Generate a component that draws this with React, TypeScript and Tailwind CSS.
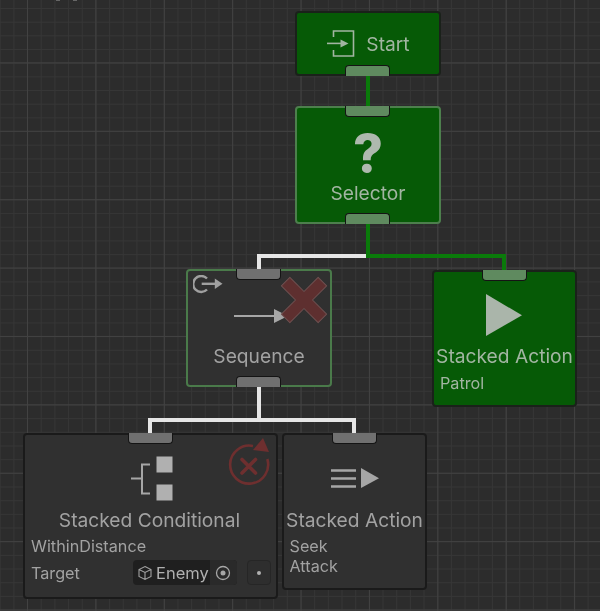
import React from "react";

const TXT = "text-[#a2a2a2]";
const TXTG = "text-[#a2b5a2]";

function Tab({ green, pos, x }: { green?: boolean; pos: "top" | "bottom"; x: string }) {
  const color = green ? "bg-[#5f8a5f]" : "bg-[#707070]";
  const shape =
    pos === "top"
      ? "-top-[2px] rounded-b-[4px] border-x-[1.5px] border-b-[1.5px]"
      : "-bottom-[2px] rounded-t-[4px] border-x-[1.5px] border-t-[1.5px]";
  return <div className={`absolute h-[11px] w-[45px] border-[#141414] ${color} ${shape} ${x}`} />;
}

function Node({ className, children }: { className: string; children: React.ReactNode }) {
  return <div className={`absolute box-border rounded-[4px] border-2 ${className}`}>{children}</div>;
}

function Wire({ className }: { className: string }) {
  return <div className={`absolute ${className}`} />;
}

export default function App() {
  return (
    <div className="h-[611px] w-[600px] overflow-hidden bg-[#2c2c2c]">
      <div
        className="relative h-[611px] w-[600px] bg-[#2c2c2c] [background-image:linear-gradient(to_right,#424242_1px,transparent_1px),linear-gradient(to_bottom,#424242_1px,transparent_1px),linear-gradient(to_right,#363636_1px,transparent_1px),linear-gradient(to_bottom,#363636_1px,transparent_1px)] [background-size:68.4px_68.4px,68.4px_68.4px,13.68px_13.68px,13.68px_13.68px] [background-position:27px_0,0_62.4px,13.4px_0,0_8px] font-['Inter',sans-serif] blur-[0.45px]"
      >
        <div className="absolute left-[56px] top-0 h-px w-[4px] bg-[#666666]" />
        <div className="absolute left-[73px] top-0 h-px w-[4px] bg-[#666666]" />

        {/* wires */}
        <Wire className="left-[366px] top-[76px] h-[30px] w-[4px] bg-[#0a7a0a]" />
        <Wire className="left-[257px] top-[254px] h-[16px] w-[4px] bg-[#e6e6e6]" />
        <Wire className="left-[257px] top-[254px] h-[4px] w-[110px] bg-[#e6e6e6]" />
        <Wire className="left-[366px] top-[223px] h-[35px] w-[4px] bg-[#0a7a0a]" />
        <Wire className="left-[366px] top-[254px] h-[4px] w-[140px] bg-[#0a7a0a]" />
        <Wire className="left-[502px] top-[254px] h-[16px] w-[4px] bg-[#0a7a0a]" />
        <Wire className="left-[257px] top-[386px] h-[36px] w-[4px] bg-[#e6e6e6]" />
        <Wire className="left-[148px] top-[418px] h-[4px] w-[208px] bg-[#e6e6e6]" />
        <Wire className="left-[148px] top-[418px] h-[16px] w-[4px] bg-[#e6e6e6]" />
        <Wire className="left-[352px] top-[418px] h-[16px] w-[4px] bg-[#e6e6e6]" />

        {/* Start */}
        <Node className="left-[295px] top-[11px] flex h-[65px] w-[146px] items-start justify-center gap-[11px] border-[#1a211a] bg-[#065a06] pl-[1px] pt-[17px]">
          <svg width="28" height="28" viewBox="0 0 28 28" className="shrink-0 text-[#a2b5a2]" fill="none" stroke="currentColor">
            <path d="M6.500 7V1h20v25h-20v-6" strokeWidth="1.600" />
            <path d="M0 13.400h15" strokeWidth="1.600" />
            <path d="M13.500 9.400l8 4-8 4z" fill="currentColor" stroke="none" />
          </svg>
          <span className={`mt-[-1px] text-[19.200px] leading-[30px] ${TXTG}`}>Start</span>
          <Tab green pos="bottom" x="left-[48px]" />
        </Node>

        {/* Selector */}
        <Node className="left-[295px] top-[106px] flex h-[118px] w-[146px] flex-col items-center border-[#4d7f4d] bg-[#065a06] pt-[18px]">
          <Tab green pos="top" x="left-[48px]" />
          <span className="h-[55px] text-[52px] font-extrabold leading-[55px] text-[#aeb9ae]">?</span>
          <span className={`mt-[-3px] text-[19.200px] leading-[30px] ${TXTG}`}>Selector</span>
          <Tab green pos="bottom" x="left-[48px]" />
        </Node>

        {/* Sequence */}
        <Node className="left-[186px] top-[269px] flex h-[118px] w-[146px] flex-col items-center border-[#4a7a4a] bg-[#303030] pt-[70px]">
          <Tab pos="top" x="left-[48px]" />
          <svg width="30" height="20" viewBox="0 0 30 20" className="absolute left-[4.500px] top-[3.500px] text-[#a0a0a0]" fill="none" stroke="currentColor">
            <path d="M14 3.500A8 8 0 1 0 14 14.500" strokeWidth="2.400" />
            <path d="M8.700 8.800h14" strokeWidth="2.400" />
            <path d="M21.800 3.600l7.700 5.200-7.700 5.200z" fill="currentColor" stroke="none" />
          </svg>
          <svg width="58" height="16" viewBox="0 0 58 16" className="absolute left-[44.500px] top-[36.500px]">
            <path d="M1 8h42" stroke="#a6a6a6" strokeWidth="2" />
            <path d="M41 1l14 7-14 7z" fill="#a6a6a6" />
          </svg>
          <svg width="50" height="50" viewBox="-25 -25 50 50" className="absolute left-[91px] top-[3.500px]">
            <path
              d="M-26 -6H-6V-26H6V-6H26V6H6V26H-6V6H-26Z"
              transform="rotate(45)"
              fill="#5e2f2f"
              stroke="#6e5050"
              strokeWidth="1"
              strokeLinejoin="round"
            />
          </svg>
          <span className={`text-[19.200px] leading-[30px] ${TXT}`}>Sequence</span>
          <Tab pos="bottom" x="left-[48px]" />
        </Node>

        {/* Stacked Action green */}
        <Node className="left-[432px] top-[270px] flex h-[137px] w-[145px] flex-col items-center border-[#1a211a] bg-[#065a06] pt-[21px]">
          <Tab green pos="top" x="left-[48px]" />
          <svg width="38" height="44" viewBox="0 0 38 44" className="ml-[-2px] shrink-0">
            <path d="M1 1l36 21.300L1 43z" fill="#aab5aa" />
          </svg>
          <span className={`mt-[4px] whitespace-nowrap text-[19.200px] leading-[30px] ${TXTG}`}>Stacked Action</span>
          <span className={`w-full pl-[6px] pt-[2px] text-[16.200px] leading-[20px] ${TXTG}`}>Patrol</span>
        </Node>

        {/* Stacked Conditional */}
        <Node className="left-[23px] top-[433px] flex h-[166px] w-[255px] flex-col border-[#1a1a1a] bg-[#303030] pt-[20px]">
          <Tab pos="top" x="left-[103px]" />
          <svg width="44" height="46" viewBox="0 0 44 46" className="ml-[104.500px] shrink-0 text-[#a6a6a6]" fill="none" stroke="currentColor">
            <path d="M1 23.500h11.500M20 9.500h-8v29h8" strokeWidth="2" />
            <rect x="26.500" y="1.500" width="16" height="16" fill="#b0b0b0" stroke="none" />
            <rect x="26.500" y="29.500" width="16" height="16" fill="#b0b0b0" stroke="none" />
          </svg>
          <svg width="46" height="50" viewBox="0 0 46 50" className="absolute left-[201.500px] top-[2.500px]" fill="none">
            <path d="M40.300 21A19 19 0 1 1 26 8" stroke="#6e2f2f" strokeWidth="2.600" />
            <path d="M36 0L42 14 26 12z" fill="#6e2f2f" />
            <path d="M15 21.500l13.500 13.500M28.500 21.500L15 35" stroke="#6e2f2f" strokeWidth="3.600" strokeLinecap="round" />
          </svg>
          <span className={`mt-[4px] pr-[2px] text-center text-[19.200px] leading-[30px] ${TXT}`}>Stacked Conditional</span>
          <span className={`pl-[6px] pt-[1px] text-[16.200px] leading-[20px] ${TXT}`}>WithinDistance</span>
          <div className="mt-[4px] flex h-[25px] items-center pl-[6px] pr-[5.500px]">
            <span className={`w-[102.500px] pt-[1px] text-[16.200px] ${TXT}`}>Target</span>
            <div className="flex h-[25px] w-[104px] items-center overflow-hidden rounded-[4px] bg-[#1f1f1f]">
              <svg width="16" height="16" viewBox="0 0 16 16" className="ml-[4px] shrink-0 text-[#a0a0a0]" fill="none" stroke="currentColor" strokeWidth="1.100">
                <path d="M8 1.500l6 3v7l-6 3-6-3v-7zM2 4.500l6 3 6-3M8 7.500v7" />
              </svg>
              <span className="ml-[3px] w-[54px] pt-[2px] text-[16.500px] text-[#b0b0b0]">Enemy</span>
              <div className="flex h-full flex-1 items-center justify-center bg-[#2a2a2a]">
                <svg width="16" height="16" viewBox="0 0 16 16" fill="none">
                  <circle cx="8" cy="8" r="6.500" stroke="#a6a6a6" strokeWidth="1.300" />
                  <circle cx="8" cy="8" r="2.500" fill="#a6a6a6" />
                </svg>
              </div>
            </div>
            <div className="ml-[10px] flex h-[25px] w-[24px] items-center justify-center rounded-[4px] border border-[#262626] bg-[#2e2e2e]">
              <div className="h-[4px] w-[4px] rounded-full bg-[#b0b0b0]" />
            </div>
          </div>
        </Node>

        {/* Stacked Action */}
        <Node className="left-[282px] top-[433px] flex h-[157px] w-[145px] flex-col items-center border-[#1a1a1a] bg-[#303030] pt-[33px]">
          <Tab pos="top" x="left-[48px]" />
          <svg width="48" height="20" viewBox="0 0 48 20" className="shrink-0">
            <path d="M0 2.500h25M0 10.500h25M0 18.500h25" stroke="#a6a6a6" strokeWidth="2.300" />
            <path d="M30 0l18 10.200L30 20z" fill="#a6a6a6" />
          </svg>
          <span className={`mt-[17px] whitespace-nowrap text-[19.200px] leading-[30px] ${TXT}`}>Stacked Action</span>
          <span className={`w-full pl-[5.500px] pt-[1px] text-[16.200px] leading-[20px] ${TXT}`}>Seek</span>
          <span className={`w-full pl-[5.500px] text-[16.200px] leading-[20px] ${TXT}`}>Attack</span>
        </Node>
      </div>
    </div>
  );
}
